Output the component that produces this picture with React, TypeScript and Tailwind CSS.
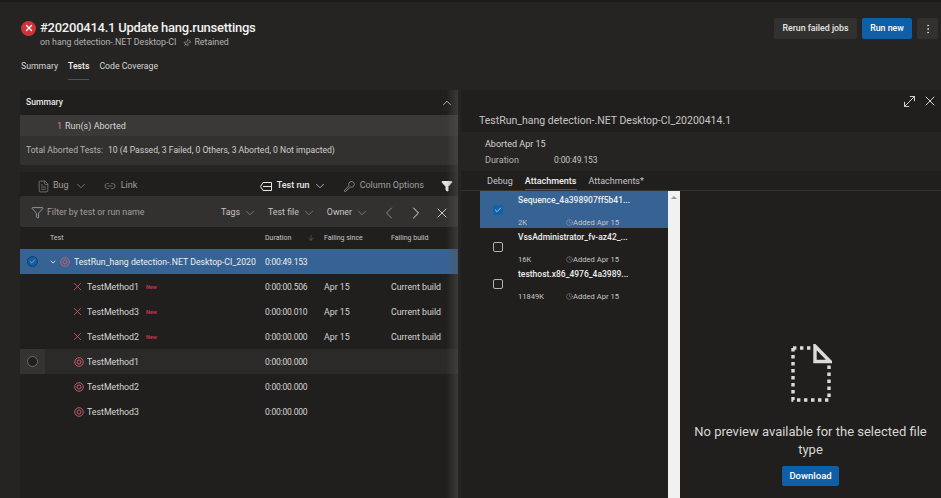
import React from "react";
import { X, ChevronDown, ChevronUp, ChevronLeft, ChevronRight, Pin, FileText, Link2, Funnel, ArrowDown, Check, MoreVertical, Clock, MoveDiagonal } from "lucide-react";

function Target({ size = 13 }: { size?: number }) {
  return (
    <svg width={size} height={size} viewBox="0 0 14 14" fill="none" stroke="#d2606c" className="shrink-0">
      <circle cx="7" cy="7" r="6" strokeWidth="1.3" />
      <circle cx="7" cy="7" r="2.8" strokeWidth="1.3" />
    </svg>
  );
}

function Row({ name, dur, since, build, badge, icon, hover }: { name: string; dur: string; since?: string; build?: string; badge?: boolean; icon: "x" | "t"; hover?: boolean }) {
  return (
    <div className={`flex h-[25px] items-center pt-[2px] text-[8.8px] text-[#d8d6d4] ${hover ? "bg-[#2b2a29]" : ""}`}>
      <div className={`mt-[-2px] flex h-[25px] w-[25px] shrink-0 items-center justify-center ${hover ? "bg-[#343332]" : ""}`}>
        {hover && <div className="size-[11px] rounded-full border border-[#6b6a69] bg-[#201f1e]" />}
      </div>
      <div className="mb-[2px] flex w-[39px] shrink-0 justify-end">
        {icon === "x" ? <X size={13} strokeWidth={1.5} color="#d2606c" /> : <Target size={10} />}
      </div>
      <span className="ml-[3px]">{name}</span>
      {badge && <span className="ml-[7px] text-[5.5px] font-bold text-[#c4314b]">New</span>}
      <div className="flex-1" />
      <span className="w-[59px] shrink-0 text-[8.5px] tracking-[-0.2px]">{dur}</span>
      <span className="w-[67px] shrink-0">{since}</span>
      <span className="w-[67px] shrink-0">{build}</span>
    </div>
  );
}

function Attachment({ name, size, selected }: { name: string; size: string; selected?: boolean }) {
  return (
    <div className={`flex h-[37px] ${selected ? "bg-[#366294]" : ""}`}>
      <div className="flex w-[38px] shrink-0 items-center justify-center pr-[3px]">
        {selected ? (
          <div className="mt-[1px] flex size-[10px] items-center justify-center rounded-[2px] bg-[#0f63ab]">
            <Check size={8} color="#fff" strokeWidth={2} />
          </div>
        ) : (
          <div className="mt-[1px] size-[10px] rounded-[2px] border border-[#b5b3b1]" />
        )}
      </div>
      <div className="flex min-w-0 flex-1 flex-col pt-[3px]">
        <div className="h-[12px] text-[8.5px] leading-[12px] font-medium text-[#f0efee]">{name}</div>
        <div className="mt-[11px] flex items-center text-[7.6px] leading-[11px] text-[#c8c6c4]">
          <span className="w-[48px]">{size}</span>
          <Clock size={7} strokeWidth={1.2} />
          <span>Added Apr 15</span>
        </div>
      </div>
    </div>
  );
}

export default function App() {
  return (
    <div className="flex h-[498px] w-[941px] flex-col overflow-hidden bg-[#252423] font-['Roboto',sans-serif] text-[#e8e6e4]">
      {/* page header */}
      <div className="h-[2px] shrink-0 bg-[#1b1a19]" />
      <div className="relative h-[88px] shrink-0 pl-[21px]">
        <div className="flex items-center pt-[17px]">
          <div className="flex size-[15px] items-center justify-center rounded-full bg-[#d13438]">
            <X size={10} color="#fff" strokeWidth={3} />
          </div>
          <div className="ml-[4px] text-[13px] leading-[18px] font-medium tracking-[-0.25px] text-[#f2f1f0]">#20200414.1 Update hang.runsettings</div>
        </div>
        <div className="mt-[-1px] ml-[19px] flex items-center text-[8.8px] leading-[13px] text-[#b5b3b1]">
          <span>on hang detection-.NET Desktop-CI</span>
          <Pin size={8} className="mr-[3px] ml-[7px] rotate-45" />
          <span>Retained</span>
        </div>
        <div className="mt-[10px] flex gap-[10px] text-[8.7px] leading-[14px] text-[#d8d6d4]">
          <span>Summary</span>
          <div className="flex flex-col">
            <span className="font-medium text-[#f2f1f0]">Tests</span>
            <div className="mt-[6px] h-[1px] bg-[#0f63ab]" />
          </div>
          <span>Code Coverage</span>
        </div>
        <div className="absolute top-[16px] right-[3px] flex items-center gap-[5px] text-[8.8px] font-medium">
          <div className="flex h-[21px] w-[83px] items-center justify-center rounded-[2px] bg-[#323130] text-[#e8e6e4]">Rerun failed jobs</div>
          <div className="flex h-[21px] w-[50px] items-center justify-center rounded-[2px] bg-[#0f5fa6] text-white">Run new</div>
          <div className="flex h-[21px] w-[21px] items-center justify-center rounded-[2px] bg-[#323130]"><MoreVertical size={12} strokeWidth={1.5} /></div>
        </div>
      </div>

      {/* body */}
      <div className="flex min-h-0 flex-1">
        {/* left column */}
        <div className="relative flex w-[461px] shrink-0 pl-[20px]">
          <div className="flex w-[438px] flex-col">
            <div className="flex h-[25px] items-center justify-between bg-[#201f1e] pr-[4px] pl-[6px] text-[8.6px] font-medium text-[#e8e6e4]">
              <span>Summary</span>
              <ChevronUp size={14} strokeWidth={1.3} />
            </div>
            <div className="flex h-[21px] items-center bg-[#3a3938] pt-[2px] pl-[37px] text-[9px] text-[#d8d6d4]">
              <span className="mr-[3px] text-[#e07a84]">1</span>Run(s) Aborted
            </div>
            <div className="flex h-[29px] items-center rounded-b-[2px] bg-[#323130] pb-[1px] pl-[6px] text-[8.6px] text-[#d0cecc]">
              <span className="mr-[5px] text-[#b5b3b1]">Total Aborted Tests:</span>10 (4 Passed, 3 Failed, 0 Others, 3 Aborted, 0 Not impacted)
            </div>
            <div className="mt-[7px] flex min-h-0 flex-1 flex-col bg-[#201f1e]">
              <div className="flex h-[24px] shrink-0 items-center pt-[4px] text-[9px] text-[#a19f9d]">
                <FileText size={13} strokeWidth={1.1} className="ml-[17px]" />
                <span className="ml-[3px]">Bug</span>
                <ChevronDown size={14} strokeWidth={1.1} className="ml-[5px]" />
                <Link2 size={12} strokeWidth={1.2} className="ml-[16px]" />
                <span className="ml-[5px]">Link</span>
                <div className="flex-1" />
                <svg width="12" height="9" viewBox="0 0 12 9" fill="none" stroke="#e8e6e4" strokeWidth="1"><path d="M3 .5h8.5v8H3M3 4.5h8.5M3 .5 .5 4.5 3 8.5" /></svg>
                <span className="ml-[5px] font-medium text-[#e8e6e4]">Test run</span>
                <ChevronDown size={14} strokeWidth={1.3} className="ml-[3px] text-[#d8d6d4]" />
                <svg width="12" height="12" viewBox="0 0 11 11" fill="none" stroke="#8a8886" strokeWidth="0.9" className="ml-[16px]"><path d="M1 10 5.5 5.2a2.6 2.6 0 1 1 1.3 1.2L2.3 10.5z" /></svg>
                <span className="ml-[5px]">Column Options</span>
                <Funnel size={12} fill="#e8e6e4" color="#e8e6e4" className="mr-[5px] ml-[17px]" />
              </div>
              <div className="flex h-[31px] shrink-0 items-center rounded-[2px] bg-[#323130] pt-[2px] text-[8.8px] text-[#a19f9d]">
                <Funnel size={13} strokeWidth={1.1} className="ml-[11px] text-[#d8d6d4]" />
                <span className="ml-[3px]">Filter by test or run name</span>
                <div className="flex-1" />
                <span className="text-[#c8c6c4]">Tags</span>
                <ChevronDown size={14} strokeWidth={1.1} className="ml-[3px]" />
                <span className="ml-[11px] text-[#c8c6c4]">Test file</span>
                <ChevronDown size={14} strokeWidth={1.1} className="ml-[3px]" />
                <span className="ml-[11px] text-[#c8c6c4]">Owner</span>
                <ChevronDown size={14} strokeWidth={1.1} className="ml-[3px]" />
                <ChevronLeft size={20} strokeWidth={1} className="ml-[10px]" />
                <ChevronRight size={20} strokeWidth={1.2} className="ml-[7px] text-[#e8e6e4]" />
                <X size={16} strokeWidth={1.4} className="mr-[8px] ml-[8px] text-[#d8d6d4]" />
              </div>
              <div className="flex h-[22px] shrink-0 items-center text-[7px] text-[#c8c6c4]">
                <span className="ml-[30px] flex-1">Test</span>
                <div className="flex w-[59px] shrink-0 items-center justify-between pr-[9px]">
                  <span>Duration</span>
                  <ArrowDown size={8} strokeWidth={1} className="text-[#a19f9d]" />
                </div>
                <span className="w-[67px] shrink-0">Failing since</span>
                <span className="w-[67px] shrink-0">Failing build</span>
              </div>
              <div className="flex h-[25px] shrink-0 items-center bg-[#366294] text-[8.7px] text-[#f0efee]">
                <div className="ml-[7px] flex size-[11px] items-center justify-center rounded-full border border-[#1b3a5c] bg-[#0f5fa6]">
                  <Check size={7} color="#cfe2f5" />
                </div>
                <ChevronDown size={8} strokeWidth={2.5} className="ml-[11px]" />
                <span className="ml-[3px]"><Target size={10} /></span>
                <span className="mt-[2px] ml-[4px] w-[191px] whitespace-nowrap">TestRun_hang detection-.NET Desktop-CI_2020</span>
                <span className="mt-[2px] text-[8.5px] tracking-[-0.2px]">0:00:49.153</span>
              </div>
              <Row icon="x" name="TestMethod1" badge dur="0:00:00.506" since="Apr 15" build="Current build" />
              <Row icon="x" name="TestMethod3" badge dur="0:00:00.010" since="Apr 15" build="Current build" />
              <Row icon="x" name="TestMethod2" badge dur="0:00:00.000" since="Apr 15" build="Current build" />
              <Row icon="t" name="TestMethod1" dur="0:00:00.000" hover />
              <Row icon="t" name="TestMethod2" dur="0:00:00.000" />
              <Row icon="t" name="TestMethod3" dur="0:00:00.000" />
            </div>
          </div>
          {/* scrim shadow next to the detail panel */}
          <div className="pointer-events-none absolute top-0 right-[3px] bottom-0 w-[12px] bg-gradient-to-r from-transparent to-[#55545380]" />
        </div>

        {/* right detail panel */}
        <div className="flex min-w-0 flex-1 flex-col bg-[#201f1e]">
          <div className="flex h-[20px] shrink-0 items-center justify-end pt-[2px] pr-[3px] text-[#d8d6d4]">
            <MoveDiagonal size={17} strokeWidth={1.4} />
            <X size={16} strokeWidth={1.5} className="ml-[4px]" />
          </div>
          <div className="flex h-[22px] shrink-0 items-center pl-[18px] text-[10.5px] text-[#c8c6c4]">TestRun_hang detection-.NET Desktop-CI_20200414.1</div>
          <div className="flex h-[39px] shrink-0 flex-col justify-center bg-[#252423] pl-[24px] text-[9px] leading-[16px]">
            <span className="text-[#d8d6d4]">Aborted Apr 15</span>
            <div className="flex items-center text-[#b5b3b1]">
              <span className="w-[69px]">Duration</span>
              <span className="text-[8.5px] tracking-[-0.1px] text-[#c8c6c4]">0:00:49.153</span>
            </div>
          </div>
          <div className="flex h-[20px] shrink-0 gap-[12px] border-b border-[#333231] pl-[26px] text-[9px] text-[#c8c6c4]">
            <span className="leading-[20px]">Debug</span>
            <div className="flex flex-col">
              <span className="h-[18px] leading-[20px] font-medium text-[#f0efee]">Attachments</span>
              <div className="h-[1px] bg-[#0f63ab]" />
            </div>
            <span className="leading-[20px]">Attachments*</span>
          </div>
          <div className="flex min-h-0 flex-1 pl-[19px]">
            <div className="w-[188px] shrink-0">
              <Attachment selected name="Sequence_4a398907ff5b41..." size="2K" />
              <Attachment name="VssAdministrator_fv-az42_..." size="16K" />
              <Attachment name="testhost.x86_4976_4a3989..." size="11849K" />
            </div>
            <div className="flex w-[12px] shrink-0 justify-center bg-[#f1f1f1] pt-[5px]">
              <div className="size-0 border-x-[3px] border-b-[3px] border-x-transparent border-b-[#9a9a9a]" />
            </div>
            <div className="flex min-w-0 flex-1 flex-col items-center pt-[153px]">
              <svg width="42" height="58" viewBox="0 0 42 58" fill="none">
                <path d="M3 4V56H39V18" stroke="#dddbd9" strokeWidth="3.4" strokeDasharray="3.4 3.6" />
                <path d="M3 4H21" stroke="#dddbd9" strokeWidth="3.4" strokeDasharray="3.4 3.6" />
                <path d="M25 2V17.5H40Z" stroke="#dddbd9" strokeWidth="3.4" strokeLinejoin="miter" />
              </svg>
              <div className="mt-[21px] w-[240px] text-center text-[13px] leading-[18px] text-[#d8d6d4]">No preview available for the selected file type</div>
              <div className="mt-[7px] flex h-[20px] w-[57px] items-center justify-center rounded-[2px] bg-[#0f5fa6] text-[9.5px] font-medium text-white">Download</div>
            </div>
          </div>
        </div>
      </div>
    </div>
  );
}
